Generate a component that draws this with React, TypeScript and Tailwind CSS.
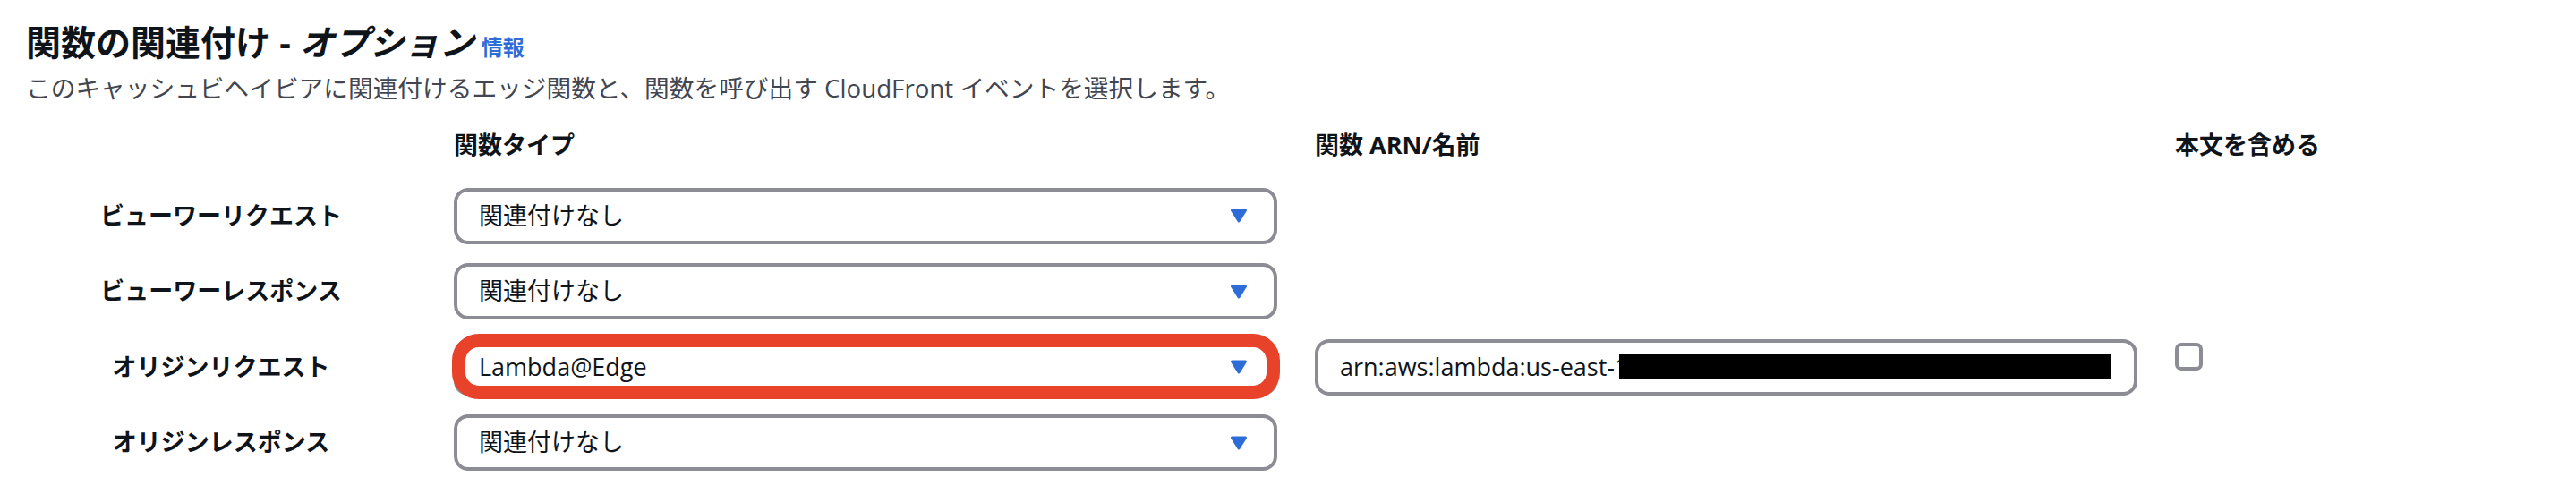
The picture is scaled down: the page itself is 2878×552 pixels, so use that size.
import React from 'react';

const rows = [
  { label: 'ビューワーリクエスト', value: '関連付けなし' },
  { label: 'ビューワーレスポンス', value: '関連付けなし' },
  { label: 'オリジンリクエスト', value: 'Lambda@Edge', highlighted: true, arn: 'arn:aws:lambda:us-east-1' },
  { label: 'オリジンレスポンス', value: '関連付けなし' },
];

function Caret() {
  return (
    <svg width="20" height="16" viewBox="0 0 20 16" className="shrink-0">
      <path d="M2.5 2h15L10 14z" fill="#2e6dd8" stroke="#2e6dd8" strokeWidth="3" strokeLinejoin="round" />
    </svg>
  );
}

function Select({ value, highlighted }: { value: string; highlighted?: boolean }) {
  return (
    <div className="relative">
      <div className="flex h-[63px] items-center justify-between rounded-[16px] border-[4px] border-[#8c8c94] bg-white pl-[24px] pr-[29px]">
        <span className="text-[27px] text-[#0f141a]">{value}</span>
        <Caret />
      </div>
      {highlighted && (
        <div className="pointer-events-none absolute -top-[6px] -bottom-[4px] -left-[2px] -right-[3px] rounded-[30px] border-[15px] border-[#e8432a]" />
      )}
    </div>
  );
}

export default function App() {
  return (
    <div className="h-[552px] w-[2878px] bg-white pl-[29px] pt-[25px] font-[family-name:'Open_Sans','Noto_Sans_CJK_JP',sans-serif] text-[#0f141a]">
      <div className="flex items-baseline">
        <h2 className="text-[39px] font-bold leading-[44px]">
          関数の関連付け - <i>オプション</i>
        </h2>
        <span className="ml-[8px] text-[24px] font-bold text-[#2e6dd8]">情報</span>
      </div>
      <p className="mt-[7px] text-[27.7px] leading-[40px] text-[#424650]">
        このキャッシュビヘイビアに関連付けるエッジ関数と、関数を呼び出す CloudFront イベントを選択します。
      </p>

      <div className="mt-[24px] grid grid-cols-[436px_920px_919px_auto] gap-x-[42px] gap-y-[21.5px]">
        <div className="h-[46px]" />
        <div className="h-[46px] text-[27px] font-bold leading-[40px]">関数タイプ</div>
        <div className="h-[46px] text-[27px] font-bold leading-[40px]">関数 ARN/名前</div>
        <div className="h-[46px] text-[27px] font-bold leading-[40px]">本文を含める</div>

        {rows.map((r) => (
          <React.Fragment key={r.label}>
            <div className="flex h-[63px] items-center justify-center text-[27px] font-bold">{r.label}</div>
            <Select value={r.value} highlighted={r.highlighted} />
            {r.arn ? (
              <div className="relative flex h-[63px] items-center rounded-[16px] border-[4px] border-[#8c8c94] bg-white pl-[24px]">
                <span className="text-[27px] text-[#0f141a]">{r.arn}</span>
                <div className="absolute left-[336px] top-[13px] h-[27px] w-[550px] bg-black" />
              </div>
            ) : (
              <div />
            )}
            {r.arn ? (
              <div className="pt-[4px]">
                <div className="h-[31px] w-[31px] rounded-[7px] border-[4px] border-[#8c8c94] bg-white" />
              </div>
            ) : (
              <div />
            )}
          </React.Fragment>
        ))}
      </div>
    </div>
  );
}
